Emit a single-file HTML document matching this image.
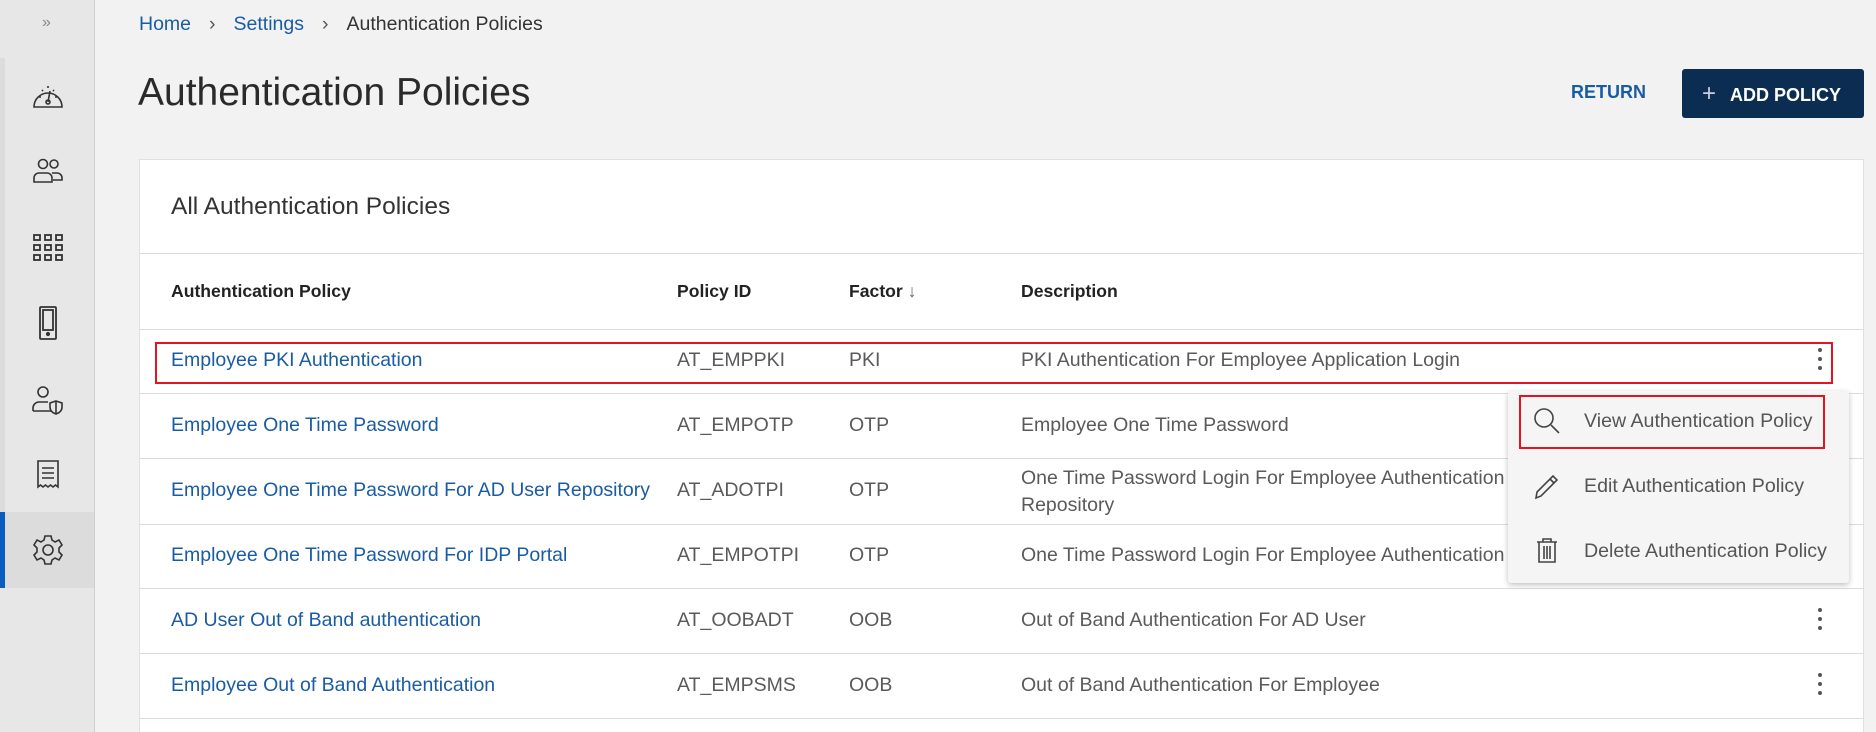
<!DOCTYPE html>
<html><head><meta charset="utf-8"><style>
*{box-sizing:border-box;margin:0;padding:0}
html{overflow:hidden;width:1876px;height:732px}
body{width:1876px;height:732px;overflow:hidden;background:#f2f2f2;font-family:"Liberation Sans",Roboto,sans-serif;position:relative;color:#333}
.sb{position:absolute;left:0;top:0;width:95px;height:732px;background:#e7e7e7;border-right:1px solid #cfcfcf}
.strip{position:absolute;left:0;top:58px;width:5px;height:454px;background:#dcdcdc}
.act{position:absolute;left:0;top:512px;width:94px;height:76px;background:#dcdcdc;border-left:5px solid #0b5cbf}
.ic{position:absolute;left:30px;width:36px;height:36px}
.abs{position:absolute;white-space:nowrap}
.card{position:absolute;left:139px;top:159px;width:1725px;height:573px;background:#fff;border:1px solid #e0e0e0;border-bottom:none}
.hl{position:absolute;left:139px;width:1725px;height:1px;background:#dcdcdc}
.lnk{color:#1a5ca3;font-size:19.5px}
.c{color:#5a5a5a;font-size:19.5px}
.th{color:#222;font-size:17.6px;font-weight:600}
.dots{position:absolute;left:1818px;width:5px}
.dots i{display:block;width:4px;height:4px;border-radius:50%;background:#555;margin-bottom:5px}
.menu{position:absolute;left:1508px;top:391px;width:341px;height:192px;background:#f5f5f5;box-shadow:0 2px 6px rgba(0,0,0,.25);border-radius:3px}
.mi{position:absolute;left:76px;font-size:19.6px;color:#555}
</style></head><body>
<div class="sb"></div><div class="strip"></div><div class="act"></div>
<div class="abs" style="left:42px;top:14px;color:#888;font-size:16px">»</div>
<svg class="ic" style="top:78px" viewBox="0 0 36 36" fill="none" stroke="#333" stroke-width="1.6"><path d="M4 29 A14 14 0 1 1 32 29 Z"/><path d="M18 24 L20 13"/><circle cx="18" cy="24" r="2"/><path d="M9 19h2M25 19h2M12 12l1 1M23 12l1 1M18 8v2"/></svg>
<svg class="ic" style="top:153px" viewBox="0 0 36 36" fill="none" stroke="#333" stroke-width="1.6"><circle cx="13" cy="11" r="4.5"/><circle cx="24" cy="11" r="4"/><path d="M4 29v-4a5 5 0 0 1 5-5h8a5 5 0 0 1 5 5v4z"/><path d="M22 20h5a5 5 0 0 1 5 5v2h-9"/></svg>
<svg class="ic" style="top:230px" viewBox="0 0 36 36" fill="none" stroke="#333" stroke-width="1.8"><g id="r"><rect x="4" y="5" width="6" height="5"/><rect x="15" y="5" width="6" height="5"/><rect x="26" y="5" width="6" height="5"/></g><use href="#r" y="10"/><use href="#r" y="20"/></svg>
<svg class="ic" style="top:305px" viewBox="0 0 36 36" fill="none" stroke="#333" stroke-width="1.8"><rect x="10" y="2" width="16" height="32" rx="1"/><rect x="13" y="5" width="10" height="20"/><circle cx="18" cy="29" r="1.2" fill="#333"/></svg>
<svg class="ic" style="top:381px" viewBox="0 0 36 36" fill="none" stroke="#333" stroke-width="1.6"><circle cx="13" cy="11" r="5"/><path d="M3 30v-3a6 6 0 0 1 6-6h9"/><path d="M3 30h18"/><path d="M26 20l6 2v4c0 4-3 6-6 7-3-1-6-3-6-7v-4z"/><path d="M26 20v13"/></svg>
<svg class="ic" style="top:457px" viewBox="0 0 36 36" fill="none" stroke="#333" stroke-width="1.6"><path d="M8 4h20v26l-2.5-2-2.5 2-2.5-2-2.5 2-2.5-2-2.5 2-2.5-2-2.5 2z"/><path d="M12 11h12M12 16h12M12 21h12"/></svg>
<svg class="ic" style="top:532px" viewBox="0 0 36 36" fill="none" stroke="#333" stroke-width="1.6"><circle cx="18" cy="18" r="5"/><path d="M15 4h6l1 4 3 2 4-2 3 5-3 3v4l3 3-3 5-4-2-3 2-1 4h-6l-1-4-3-2-4 2-3-5 3-3v-4l-3-3 3-5 4 2 3-2z"/></svg>

<div class="abs" style="left:139px;top:13px;font-size:19.5px"><span style="color:#1a5ca3">Home</span><span style="color:#555;margin:0 18px">›</span><span style="color:#1a5ca3">Settings</span><span style="color:#555;margin:0 18px">›</span><span style="color:#333">Authentication Policies</span></div>
<div class="abs" style="left:138px;top:71px;font-size:39px;color:#2a2a2a">Authentication Policies</div>
<div class="abs" style="left:1571px;top:82px;font-size:18px;font-weight:600;color:#1a5ca3">RETURN</div>
<div class="abs" style="left:1682px;top:69px;width:182px;height:49px;background:#0b2d52;border-radius:3px;color:#fff;font-size:18px;font-weight:700;line-height:49px;padding-left:20px"><span style="font-weight:300;font-size:24px;color:#ccd;margin-right:14px">+</span>ADD POLICY</div>

<div class="card"></div>
<div class="abs" style="left:171px;top:193px;font-size:24.5px;color:#333">All Authentication Policies</div>
<div class="hl" style="top:253px"></div>
<div class="abs th" style="left:171px;top:281px">Authentication Policy</div>
<div class="abs th" style="left:677px;top:281px">Policy ID</div>
<div class="abs th" style="left:849px;top:281px">Factor <span style="color:#666;font-weight:400">↓</span></div>
<div class="abs th" style="left:1021px;top:281px">Description</div>
<div class="hl" style="top:329px"></div>

<div class="abs lnk" style="left:171px;top:349px">Employee PKI Authentication</div>
<div class="abs c" style="left:677px;top:349px">AT_EMPPKI</div><div class="abs c" style="left:849px;top:349px">PKI</div>
<div class="abs c" style="left:1021px;top:349px">PKI Authentication For Employee Application Login</div>
<div class="dots" style="top:348px"><i></i><i></i><i></i></div>
<div class="abs" style="left:155px;top:342px;width:1678px;height:42px;border:2px solid #e3141e"></div>
<div class="hl" style="top:393px"></div>

<div class="abs lnk" style="left:171px;top:414px">Employee One Time Password</div>
<div class="abs c" style="left:677px;top:414px">AT_EMPOTP</div><div class="abs c" style="left:849px;top:414px">OTP</div>
<div class="abs c" style="left:1021px;top:414px">Employee One Time Password</div>
<div class="hl" style="top:458px"></div>

<div class="abs lnk" style="left:171px;top:479px">Employee One Time Password For AD User Repository</div>
<div class="abs c" style="left:677px;top:479px">AT_ADOTPI</div><div class="abs c" style="left:849px;top:479px">OTP</div>
<div class="abs c" style="left:1021px;top:465px;line-height:27px">One Time Password Login For Employee Authentication (<br>Repository</div>
<div class="hl" style="top:524px"></div>

<div class="abs lnk" style="left:171px;top:544px">Employee One Time Password For IDP Portal</div>
<div class="abs c" style="left:677px;top:544px">AT_EMPOTPI</div><div class="abs c" style="left:849px;top:544px">OTP</div>
<div class="abs c" style="left:1021px;top:544px">One Time Password Login For Employee Authentication (</div>
<div class="hl" style="top:588px"></div>

<div class="abs lnk" style="left:171px;top:609px">AD User Out of Band authentication</div>
<div class="abs c" style="left:677px;top:609px">AT_OOBADT</div><div class="abs c" style="left:849px;top:609px">OOB</div>
<div class="abs c" style="left:1021px;top:609px">Out of Band Authentication For AD User</div>
<div class="dots" style="top:608px"><i></i><i></i><i></i></div>
<div class="hl" style="top:653px"></div>

<div class="abs lnk" style="left:171px;top:674px">Employee Out of Band Authentication</div>
<div class="abs c" style="left:677px;top:674px">AT_EMPSMS</div><div class="abs c" style="left:849px;top:674px">OOB</div>
<div class="abs c" style="left:1021px;top:674px">Out of Band Authentication For Employee</div>
<div class="dots" style="top:673px"><i></i><i></i><i></i></div>
<div class="hl" style="top:718px"></div>

<div class="menu">
<svg class="abs" style="left:24px;top:15px" width="30" height="30" viewBox="0 0 30 30" fill="none" stroke="#444" stroke-width="1.6"><circle cx="12" cy="12" r="9"/><path d="M19 19l8 8"/></svg>
<div class="mi" style="top:19px">View Authentication Policy</div>
<svg class="abs" style="left:24px;top:80px" width="30" height="30" viewBox="0 0 30 30" fill="none" stroke="#444" stroke-width="1.6"><path d="M4 27l1-6L21 5l4 4L9 25z M18 8l4 4"/></svg>
<div class="mi" style="top:84px">Edit Authentication Policy</div>
<svg class="abs" style="left:24px;top:144px" width="30" height="30" viewBox="0 0 30 30" fill="none" stroke="#444" stroke-width="1.6"><path d="M5 7h20M11 7V4h8v3M7 7v20h16V7M12 11v13M15 11v13M18 11v13"/></svg>
<div class="mi" style="top:149px">Delete Authentication Policy</div>
</div>
<div class="abs" style="left:1519px;top:395px;width:306px;height:54px;border:2px solid #e3141e"></div>
</body></html>
